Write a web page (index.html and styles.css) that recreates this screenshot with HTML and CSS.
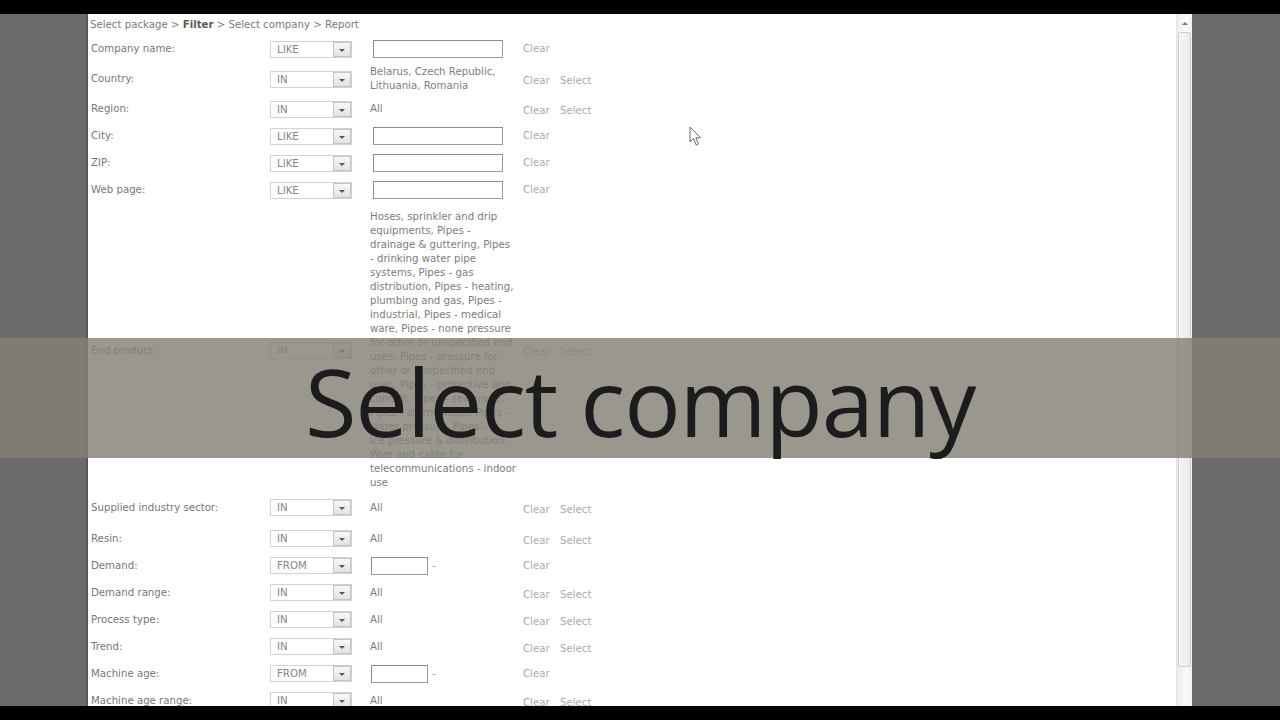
FILE: index.html
```html
<!DOCTYPE html>
<html>
<head>
<meta charset="utf-8">
<title>Filter</title>
<link rel="stylesheet" href="styles.css">
</head>
<body>
<div class="screen">
  <div class="stage">
    <div class="side side-left"></div>
    <div class="panel">
      <div class="content">
        <div class="crumbs">Select package &gt; <b>Filter</b> &gt; Select company &gt; Report</div>
        <table class="filter">
          <tr class="r27">
            <td class="lbl">Company name:</td>
            <td class="op"><span class="sel"><span class="sel-val">LIKE</span><span class="sel-btn"></span></span></td>
            <td class="val"><span class="inp"></span></td>
            <td class="act">Clear</td><td class="act"></td>
          </tr>
          <tr class="t">
            <td class="lbl">Country:</td>
            <td class="op"><span class="sel"><span class="sel-val">IN</span><span class="sel-btn"></span></span></td>
            <td class="val">Belarus, Czech Republic,<br>Lithuania, Romania</td>
            <td class="act">Clear</td><td class="act">Select</td>
          </tr>
          <tr class="r27 t">
            <td class="lbl">Region:</td>
            <td class="op"><span class="sel"><span class="sel-val">IN</span><span class="sel-btn"></span></span></td>
            <td class="val">All</td>
            <td class="act">Clear</td><td class="act">Select</td>
          </tr>
          <tr class="r27">
            <td class="lbl">City:</td>
            <td class="op"><span class="sel"><span class="sel-val">LIKE</span><span class="sel-btn"></span></span></td>
            <td class="val"><span class="inp"></span></td>
            <td class="act">Clear</td><td class="act"></td>
          </tr>
          <tr class="r27">
            <td class="lbl">ZIP:</td>
            <td class="op"><span class="sel"><span class="sel-val">LIKE</span><span class="sel-btn"></span></span></td>
            <td class="val"><span class="inp"></span></td>
            <td class="act">Clear</td><td class="act"></td>
          </tr>
          <tr class="r27">
            <td class="lbl">Web page:</td>
            <td class="op"><span class="sel"><span class="sel-val">LIKE</span><span class="sel-btn"></span></span></td>
            <td class="val"><span class="inp"></span></td>
            <td class="act">Clear</td><td class="act"></td>
          </tr>
          <tr class="big">
            <td class="lbl">End product:</td>
            <td class="op"><span class="sel"><span class="sel-val">IN</span><span class="sel-btn"></span></span></td>
            <td class="val">Hoses, sprinkler and drip<br>equipments, Pipes -<br>drainage &amp; guttering, Pipes<br>- drinking water pipe<br>systems, Pipes - gas<br>distribution, Pipes - heating,<br>plumbing and gas, Pipes -<br>industrial, Pipes - medical<br>ware, Pipes - none pressure<br>for other or unspecified end<br>uses, Pipes - pressure for<br>other or unspecified end<br>uses, Pipes - protective and<br>conduit, Pipes - sewerage,<br>Pipes - storm water, Pipes -<br>water pressure, Pipes -<br>ice pressure &amp; distribution,<br>Wire and cable for<br>telecommunications - indoor<br>use</td>
            <td class="act">Clear</td><td class="act">Select</td>
          </tr>
          <tr class="r35 t">
            <td class="lbl">Supplied industry sector:</td>
            <td class="op"><span class="sel"><span class="sel-val">IN</span><span class="sel-btn"></span></span></td>
            <td class="val">All</td>
            <td class="act">Clear</td><td class="act">Select</td>
          </tr>
          <tr class="r27 t">
            <td class="lbl">Resin:</td>
            <td class="op"><span class="sel"><span class="sel-val">IN</span><span class="sel-btn"></span></span></td>
            <td class="val">All</td>
            <td class="act">Clear</td><td class="act">Select</td>
          </tr>
          <tr class="r27">
            <td class="lbl">Demand:</td>
            <td class="op"><span class="sel"><span class="sel-val">FROM</span><span class="sel-btn"></span></span></td>
            <td class="val"><span class="inp inp-sm"></span><span class="dash">-</span></td>
            <td class="act">Clear</td><td class="act"></td>
          </tr>
          <tr class="r27 t">
            <td class="lbl">Demand range:</td>
            <td class="op"><span class="sel"><span class="sel-val">IN</span><span class="sel-btn"></span></span></td>
            <td class="val">All</td>
            <td class="act">Clear</td><td class="act">Select</td>
          </tr>
          <tr class="r27 t">
            <td class="lbl">Process type:</td>
            <td class="op"><span class="sel"><span class="sel-val">IN</span><span class="sel-btn"></span></span></td>
            <td class="val">All</td>
            <td class="act">Clear</td><td class="act">Select</td>
          </tr>
          <tr class="r27 t">
            <td class="lbl">Trend:</td>
            <td class="op"><span class="sel"><span class="sel-val">IN</span><span class="sel-btn"></span></span></td>
            <td class="val">All</td>
            <td class="act">Clear</td><td class="act">Select</td>
          </tr>
          <tr class="r27">
            <td class="lbl">Machine age:</td>
            <td class="op"><span class="sel"><span class="sel-val">FROM</span><span class="sel-btn"></span></span></td>
            <td class="val"><span class="inp inp-sm"></span><span class="dash">-</span></td>
            <td class="act">Clear</td><td class="act"></td>
          </tr>
          <tr class="r27 t">
            <td class="lbl">Machine age range:</td>
            <td class="op"><span class="sel"><span class="sel-val">IN</span><span class="sel-btn"></span></span></td>
            <td class="val">All</td>
            <td class="act">Clear</td><td class="act">Select</td>
          </tr>
        </table>
      </div>
      <div class="scrollbar">
        <div class="sb-up"></div>
        <div class="sb-thumb"></div>
        <div class="sb-track"></div>
      </div>
    </div>
    <div class="side side-right"></div>
  </div>

  <svg class="cursor" width="14" height="22" viewBox="0 0 14 22">
    <path d="M1 1 L1 16 L4.5 12.5 L7.2 19 L9.4 18 L6.8 11.8 L11.5 11.8 Z" fill="#fff" stroke="#6a6a6a" stroke-width="1" stroke-linejoin="round"/>
  </svg>

  <div class="band"><span class="band-title">Select company</span></div>
</div>
</body>
</html>
```

FILE: styles.css
```css
* { box-sizing: border-box; }
html, body { margin: 0; padding: 0; }
body {
  background: #000;
  width: 1280px;
  height: 720px;
  overflow: hidden;
  font-family: "DejaVu Sans", "Liberation Sans", sans-serif;
}
.screen {
  position: relative;
  height: 720px;
  padding: 14px 0;
}
.stage {
  display: flex;
  height: 692px;
}
.side { background: #6b6b6b; }
.side-left {
  width: 88px;
  border-right: 2px solid #585858;
}
.side-right { flex: 1; }
.panel {
  width: 1104px;
  display: flex;
  background: #fff;
}
.content {
  flex: 1;
  overflow: hidden;
  padding: 4px 0 0 2px;
  font-size: 10.2px;
  line-height: 14px;
  color: #7a7a7a;
}
.crumbs {
  color: #7a7a7a;
  margin-bottom: 3.5px;
  white-space: nowrap;
}
.crumbs b { color: #5a5a5a; }

.filter {
  border-collapse: collapse;
  border-spacing: 0;
}
.filter td {
  padding: 0;
  vertical-align: middle;
  white-space: nowrap;
}
.r27 { height: 27px; }
.r35 { height: 35px; }
.lbl { width: 180px; padding-left: 1px !important; color: #777; }
.op { width: 100px; }
.val { width: 153px; padding: 2.5px 0 !important; color: #7d7d7d; }
.act { width: 37px; color: #ababab; }
.t .act { padding-top: 4px !important; }
.big .val { padding: 6.5px 0 0 0 !important; }
.big .lbl, .big .op { padding-top: 8px !important; }
.big .act { padding-top: 11px !important; }

.sel {
  display: flex;
  width: 82px;
  height: 17px;
  border: 1px solid #d2d2d2;
  background: #fff;
}
.sel-val {
  flex: 1;
  padding-left: 6px;
  line-height: 15px;
  color: #858585;
}
.sel-btn {
  width: 18px;
  border: 1px solid #c4c4c4;
  background: linear-gradient(#f8f8f8, #e2e2e2);
  display: flex;
  align-items: center;
  justify-content: center;
}
.sel-btn::after {
  content: "";
  border-left: 3px solid transparent;
  border-right: 3px solid transparent;
  border-top: 3px solid #555;
  margin-top: 2px;
}
.inp {
  display: block;
  width: 130px;
  height: 18px;
  margin-left: 3px;
  border: 1px solid #9c9c9c;
  border-top-color: #8c8c8c;
  border-left-color: #8c8c8c;
  background: #fff;
}
.inp-sm {
  display: inline-block;
  vertical-align: middle;
  width: 57px;
  margin-left: 1px;
}
.dash {
  display: inline-block;
  vertical-align: middle;
  margin-left: 4px;
  color: #999;
}

.scrollbar {
  width: 16px;
  display: flex;
  flex-direction: column;
  background: linear-gradient(to right, #ececec, #fafafa 60%, #f2f2f2);
  border-left: 1px solid #e4e4e4;
}
.sb-up {
  height: 18px;
  display: flex;
  align-items: center;
  justify-content: center;
}
.sb-up::after {
  content: "";
  border-left: 3px solid transparent;
  border-right: 3px solid transparent;
  border-bottom: 3px solid #777;
}
.sb-thumb {
  height: 635px;
  margin: 0 1px;
  border: 1px solid #d0d0d0;
  border-radius: 2px;
  background: linear-gradient(to right, #f6f6f6, #e9e9e9);
}
.sb-track { flex: 1; }

.cursor {
  position: absolute;
  left: 689px;
  top: 126px;
}

.band {
  position: absolute;
  left: 0;
  right: 0;
  top: 338px;
  height: 120px;
  background: rgba(132, 128, 118, 0.82);
  text-align: center;
  padding-top: 6px;
}
.band-title {
  font-family: "Open Sans", "Noto Sans", sans-serif;
  font-size: 94px;
  line-height: 114px;
  letter-spacing: -1.2px;
  color: #1c1c1c;
  white-space: nowrap;
}
```
